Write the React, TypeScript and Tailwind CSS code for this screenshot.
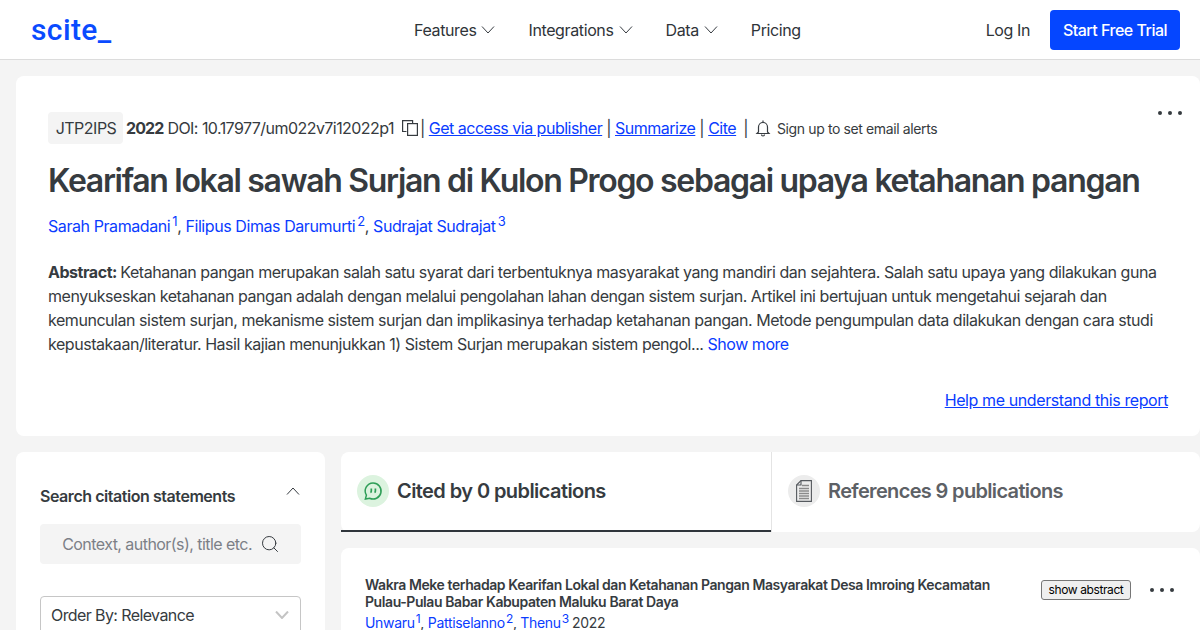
import React from 'react';
import { Search } from 'lucide-react';

const font = 'font-["Inter","Liberation_Sans",sans-serif]';

function Dots() {
  return (
    <div className="flex items-center gap-[6px]">
      <span className="size-[4px] rounded-full bg-[#363b40]" />
      <span className="size-[4px] rounded-full bg-[#363b40]" />
      <span className="size-[4px] rounded-full bg-[#363b40]" />
    </div>
  );
}

function Chevron({ up, color = '#363b40', width = 1, size = 14 }: { up?: boolean; color?: string; width?: number; size?: number }) {
  return (
    <svg width={size} height="8" viewBox="0 0 14 8" fill="none" stroke={color} strokeWidth={width}>
      <path d={up ? 'M1 7.5l6-6.5 6 6.5' : 'M1 .5l6 6.5 6-6.5'} />
    </svg>
  );
}

function NavItem({ label, menu }: { label: string; menu?: boolean }) {
  return (
    <div className="flex items-center gap-[5px] text-[16px] tracking-[-0.38px] text-[#2f3439]">
      <span>{label}</span>
      {menu && <Chevron />}
    </div>
  );
}

function Sup({ n, small }: { n: number; small?: boolean }) {
  return <sup className={small ? 'top-[-5px] ml-[1px] text-[12px]' : 'top-[-6px] ml-[2px] text-[13px]'}>{n}</sup>;
}

function CopyIcon() {
  return (
    <svg width="16" height="16" viewBox="0 0 16 16" fill="none" stroke="#363b40" strokeWidth="1.2" className="shrink-0">
      <path d="M4.5 11.5H.6V.6h10v3" />
      <rect x="5.6" y="3.6" width="9.8" height="11.8" />
    </svg>
  );
}

function BellIcon() {
  return (
    <svg width="16" height="17" viewBox="0 0 16 17" fill="none" stroke="#363b40" strokeWidth="1.2" className="shrink-0">
      <path d="M8 .5v2" />
      <path d="M3.5 12V7a4.5 4.5 0 0 1 9 0v5l1.5 1.5H2z" />
      <path d="M6.5 14.5a1.5 1.5 0 0 0 3 0" />
    </svg>
  );
}

function QuoteIcon() {
  return (
    <svg width="20" height="20" viewBox="0 0 20 20" fill="none" stroke="#2e9e57" strokeWidth="1.5">
      <path d="M10 2a8 8 0 1 1-3.4 15.2L2.4 18l1-3.8A8 8 0 0 1 10 2z" />
      <path d="M8.3 7.5v2.4c0 .8-.3 1.3-.9 1.6M12.4 7.5v2.4c0 .8-.3 1.3-.9 1.6" strokeWidth="1.7" />
    </svg>
  );
}

function DocIcon() {
  return (
    <svg width="16" height="22" viewBox="0 0 16 22" fill="none" stroke="#55595e" strokeWidth="1.1">
      <path d="M5 .6h10.4v20.8H.6V5z" />
      <path d="M5 .6V5H.6" />
      <path d="M6 5.5h7M3 8.5h10M3 11h10M3 13.5h10M3 16h10M3 18.5h10" stroke="#8a8a8a" strokeWidth="1.3" />
    </svg>
  );
}

export default function App() {
  return (
    <div className={`h-[630px] w-[1200px] overflow-hidden bg-[#f4f4f4] ${font} text-[#363b40]`}>
      {/* header */}
      <header className="flex h-[60px] items-center border-b border-[#dcdcdc] bg-white pr-[20px] pl-[31px]">
        <div className="w-[383px] shrink-0 font-['Roboto',sans-serif] text-[30px] leading-none font-medium tracking-[0.4px] text-[#0a4bff]">scite_</div>
        <nav className="flex items-center gap-[33px]">
          <NavItem label="Features" menu />
          <NavItem label="Integrations" menu />
          <NavItem label="Data" menu />
          <NavItem label="Pricing" />
        </nav>
        <div className="ml-auto flex items-center gap-[20px]">
          <span className="text-[16px] tracking-[-0.4px] text-[#2f3439]">Log In</span>
          <button className="h-[40px] w-[130px] rounded-[4px] bg-[#0546ff] text-[16px] font-medium tracking-[-0.5px] text-white">Start Free Trial</button>
        </div>
      </header>

      <main className="flex flex-col gap-[16px] pt-[16px] pl-[16px]">
        {/* report card */}
        <section className="flex h-[360px] flex-col rounded-[8px] bg-white px-[32px] pt-[36px]">
          <div className="flex h-[32px] items-center text-[16px] tracking-[-0.5px] whitespace-nowrap">
            <span className="mr-[3px] flex h-[32px] w-[75px] items-center justify-center rounded-[4px] bg-[#f4f4f4] pl-[1px]">JTP2IPS</span>
            <b className="mr-[4px] font-bold tracking-[-0.9px]">2022</b>
            <span className="tracking-[-0.55px]">DOI: 10.17977/um022v7i12022p1</span>
            <span className="ml-[8px]"><CopyIcon /></span>
            <span className="mr-[4px] ml-[2px]">|</span>
            <a className="text-[#0a3cff] underline">Get access via publisher</a>
            <span className="mx-[4px]">|</span>
            <a className="text-[#0a3cff] underline">Summarize</a>
            <span className="mx-[4px]">|</span>
            <a className="text-[#0a3cff] underline">Cite</a>
            <span className="mr-[7px] ml-[7px]">|</span>
            <BellIcon />
            <span className="ml-[6px] text-[14px] tracking-[-0.38px]">Sign up to set email alerts</span>
            <div className="relative grow">
              <div className="absolute top-[-17px] right-[-14px]"><Dots /></div>
            </div>
          </div>
          <h1 className="mt-[16px] text-[32px] leading-[42px] font-semibold tracking-[-1.31px] whitespace-nowrap">Kearifan lokal sawah Surjan di Kulon Progo sebagai upaya ketahanan pangan</h1>
          <div className="mt-[12px] text-[16px] leading-[24px] tracking-[-0.42px] text-[#0a3cff]">
            Sarah Pramadani<Sup n={1} /><span className="text-[#363b40]">, </span>
            Filipus Dimas Darumurti<Sup n={2} /><span className="text-[#363b40]">, </span>
            Sudrajat Sudrajat<Sup n={3} />
          </div>
          <p className="mt-[22px] text-[16px] leading-[24px] tracking-[-0.46px]">
            <b className="font-bold">Abstract: </b>
            Ketahanan pangan merupakan salah satu syarat dari terbentuknya masyarakat yang mandiri dan sejahtera. Salah satu upaya yang dilakukan guna menyukseskan ketahanan pangan adalah dengan melalui pengolahan lahan dengan sistem surjan. Artikel ini bertujuan untuk mengetahui sejarah dan kemunculan sistem surjan, mekanisme sistem surjan dan implikasinya terhadap ketahanan pangan. Metode pengumpulan data dilakukan dengan cara studi kepustakaan/literatur. Hasil kajian menunjukkan 1) Sistem Surjan merupakan sistem pengol... <a className="text-[#0a3cff]">Show more</a>
          </p>
          <div className="mt-[32px] text-right text-[16px] tracking-[-0.4px] text-[#0a3cff] underline">Help me understand this report</div>
        </section>

        <div className="flex gap-[16px]">
          {/* sidebar */}
          <aside className="h-[300px] w-[309px] shrink-0 rounded-[8px] bg-white px-[24px] pt-[32px]">
            <div className="flex items-start justify-between">
              <span className="text-[16px] font-semibold tracking-[-0.45px]">Search citation statements</span>
              <span className="mt-[3px] mr-[1px]"><Chevron up /></span>
            </div>
            <div className="mt-[16px] flex h-[40px] items-center justify-end gap-[8px] rounded-[4px] bg-[#f4f4f4] pr-[21px] text-[16px] tracking-[-0.55px] text-[#7c8087]">
              <span>Context, author(s), title etc.</span>
              <Search size={20} strokeWidth={1.2} className="text-[#363b40]" />
            </div>
            <div className="mt-[32px] flex h-[40px] items-center justify-between rounded-[4px] border border-[#c6c6c6] pr-[11px] pb-[2px] pl-[10px] text-[16px] tracking-[-0.6px]">
              <span>Order By: Relevance</span>
              <Chevron color="#c4c4c4" width={2} />
            </div>
          </aside>

          <div className="flex min-w-0 grow flex-col gap-[16px]">
            {/* tabs */}
            <div className="flex h-[80px] rounded-[8px] bg-white">
              <div className="flex h-[80px] w-[430px] shrink-0 items-center gap-[8px] border-b-2 border-[#2f353b] pb-[1px] pl-[16px] text-[20px] font-semibold tracking-[-0.58px]">
                <span className="flex size-[32px] items-center justify-center rounded-full bg-[#dcf3df]"><QuoteIcon /></span>
                Cited by 0 publications
              </div>
              <div className="flex h-[80px] grow items-center gap-[8px] border-l border-[#e4e4e4] pb-[2px] pl-[16px] text-[20px] font-semibold tracking-[-0.66px] text-[#5d6166]">
                <span className="flex size-[32px] items-center justify-center rounded-full bg-[#ececec]"><DocIcon /></span>
                References 9 publications
              </div>
            </div>
            {/* result */}
            <div className="flex h-[200px] justify-between rounded-[8px] bg-white pt-[28px] pr-[26px] pl-[24px]">
              <div className="w-[650px]">
                <div className="text-[14px] leading-[17px] font-semibold tracking-[-0.42px]">Wakra Meke terhadap Kearifan Lokal dan Ketahanan Pangan Masyarakat Desa Imroing Kecamatan Pulau-Pulau Babar Kabupaten Maluku Barat Daya</div>
                <div className="mt-[2px] text-[14px] tracking-[-0.3px] text-[#0a3cff]">
                  Unwaru<Sup n={1} small /><span className="text-[#363b40]">, </span>
                  Pattiselanno<Sup n={2} small /><span className="text-[#363b40]">, </span>
                  Thenu<Sup n={3} small /><span className="ml-[3px] text-[#363b40]">2022</span>
                </div>
              </div>
              <div className="mt-[4px] flex h-[20px] items-center gap-[19px]">
                <button className="h-[20px] w-[90px] rounded-[3px] border border-[#767676] bg-[#efefef] text-[12px] leading-none tracking-[-0.4px] text-black">show abstract</button>
                <Dots />
              </div>
            </div>
          </div>
        </div>
      </main>
    </div>
  );
}
